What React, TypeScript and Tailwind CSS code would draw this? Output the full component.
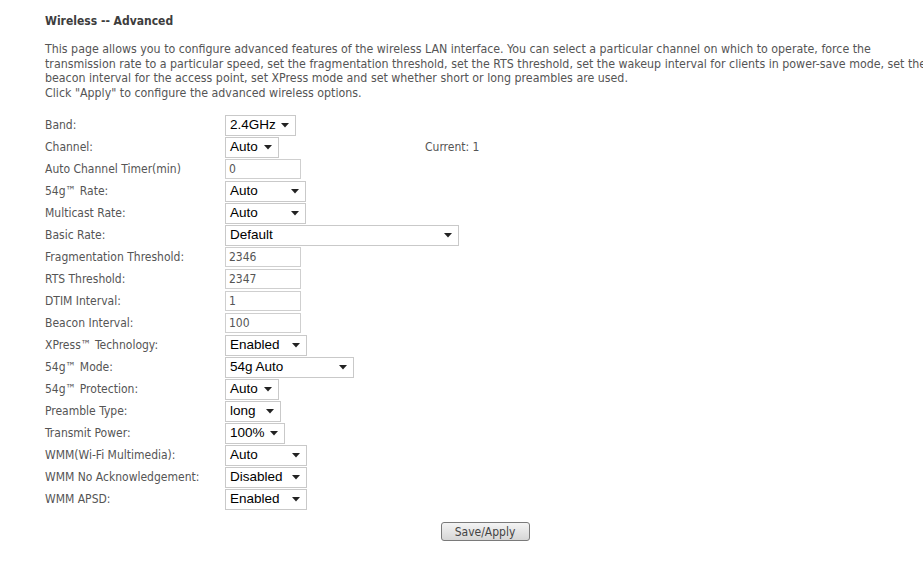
import React from "react";

const font = { fontFamily: '"DejaVu Sans Condensed", "DejaVu Sans", sans-serif', fontStretch: "semi-condensed" } as React.CSSProperties;

function Select({ value, w }: { value: string; w: string }) {
  return (
    <div
      className={`${w} shrink-0 h-[21px] border border-[#c9c9c9] bg-white flex items-center justify-between pl-[4px] pr-[6px] text-[13.5px] text-black`}
      style={{ fontFamily: '"Liberation Sans", Arial, sans-serif' }}
    >
      <span className="leading-none">{value}</span>
      <svg width="8" height="5" viewBox="0 0 8 5" className="shrink-0">
        <polygon points="0,0 8,0 4,4.5" fill="#222" />
      </svg>
    </div>
  );
}

function Input({ value }: { value: string }) {
  return (
    <div className="w-[76px] shrink-0 h-[20px] border border-[#cfcfcf] bg-white flex items-center pl-[3px] text-[12px] text-[#555]">
      {value}
    </div>
  );
}

type Row = { label: string; ctrl: React.ReactNode; extra?: string };

const rows: Row[] = [
  { label: "Band:", ctrl: <Select value="2.4GHz" w="w-[71px]" /> },
  { label: "Channel:", ctrl: <Select value="Auto" w="w-[54px]" />, extra: "Current: 1" },
  { label: "Auto Channel Timer(min)", ctrl: <Input value="0" /> },
  { label: "54g™ Rate:", ctrl: <Select value="Auto" w="w-[81px]" /> },
  { label: "Multicast Rate:", ctrl: <Select value="Auto" w="w-[81px]" /> },
  { label: "Basic Rate:", ctrl: <Select value="Default" w="w-[234px]" /> },
  { label: "Fragmentation Threshold:", ctrl: <Input value="2346" /> },
  { label: "RTS Threshold:", ctrl: <Input value="2347" /> },
  { label: "DTIM Interval:", ctrl: <Input value="1" /> },
  { label: "Beacon Interval:", ctrl: <Input value="100" /> },
  { label: "XPress™ Technology:", ctrl: <Select value="Enabled" w="w-[82px]" /> },
  { label: "54g™ Mode:", ctrl: <Select value="54g Auto" w="w-[129px]" /> },
  { label: "54g™ Protection:", ctrl: <Select value="Auto" w="w-[54px]" /> },
  { label: "Preamble Type:", ctrl: <Select value="long" w="w-[56px]" /> },
  { label: "Transmit Power:", ctrl: <Select value="100%" w="w-[60px]" /> },
  { label: "WMM(Wi-Fi Multimedia):", ctrl: <Select value="Auto" w="w-[82px]" /> },
  { label: "WMM No Acknowledgement:", ctrl: <Select value="Disabled" w="w-[82px]" /> },
  { label: "WMM APSD:", ctrl: <Select value="Enabled" w="w-[82px]" /> },
];

export default function App() {
  return (
    <div className="w-[923px] h-[564px] bg-white overflow-hidden text-[#555] text-[12px]" style={font}>
      <div className="pl-[45px] pt-[13px]">
        <div className="font-bold text-[12px] text-[#3d3d3d] leading-[16px]">Wireless -- Advanced</div>
        <div className="mt-[13px] text-[12.3px] leading-[14.5px] whitespace-nowrap text-[#555]">
          This page allows you to configure advanced features of the wireless LAN interface. You can select a particular channel on which to operate, force the
          <br />
          transmission rate to a particular speed, set the fragmentation threshold, set the RTS threshold, set the wakeup interval for clients in power-save mode, set the
          <br />
          beacon interval for the access point, set XPress mode and set whether short or long preambles are used.
          <br />
          Click "Apply" to configure the advanced wireless options.
        </div>
        <div className="mt-[14px] flex flex-col">
          {rows.map((r) => (
            <div key={r.label} className="h-[22px] flex items-center">
              <div className="w-[180px] shrink-0 whitespace-nowrap">{r.label}</div>
              <div className="w-[200px] shrink-0 flex items-center">{r.ctrl}</div>
              {r.extra && <div>{r.extra}</div>}
            </div>
          ))}
        </div>
        <div className="mt-[12px] w-[880px] flex justify-center">
          <button className="w-[89px] h-[19px] rounded-[3px] border border-[#7a7a7a] bg-gradient-to-b from-[#f4f4f4] to-[#d6d6d6] text-[12px] text-[#444] leading-none flex items-center justify-center" style={font}>
            Save/Apply
          </button>
        </div>
      </div>
    </div>
  );
}
